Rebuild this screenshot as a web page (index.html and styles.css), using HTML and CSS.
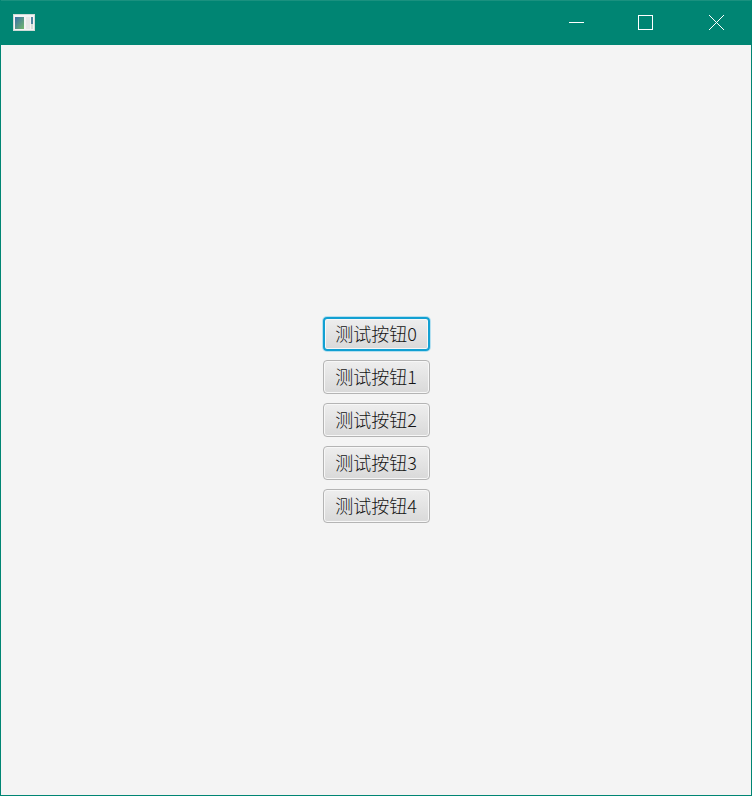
FILE: index.html
```html
<!DOCTYPE html>
<html lang="zh-CN">
<head>
<meta charset="utf-8">
<title>测试按钮</title>
<link rel="stylesheet" href="styles.css">
</head>
<body>
<div class="window">
  <header class="titlebar">
    <svg class="app-icon" width="22" height="17" viewBox="0 0 22 17" aria-hidden="true">
      <rect x="0" y="0" width="22" height="17" fill="#cfdbd8"/>
      <rect x="1" y="1" width="20" height="15" fill="#f4f4f4"/>
      <defs>
        <linearGradient id="pic" x1="0" y1="0" x2="1" y2="1">
          <stop offset="0" stop-color="#3a6fa8"/>
          <stop offset="1" stop-color="#73b86c"/>
        </linearGradient>
      </defs>
      <rect x="2" y="3" width="9" height="12" fill="url(#pic)"/>
      <rect x="13" y="3" width="4" height="12" fill="#e8e8e8"/>
      <rect x="18" y="3" width="2" height="7" fill="#4f86a0"/>
      <rect x="18" y="10" width="2" height="5" fill="#d5e0d8"/>
    </svg>
    <div class="controls">
      <button class="ctl" aria-label="最小化">
        <svg width="15" height="15" viewBox="0 0 15 15"><path d="M0 7.5H15" stroke="#fff" fill="none"/></svg>
      </button>
      <button class="ctl" aria-label="最大化">
        <svg width="15" height="15" viewBox="0 0 15 15"><rect x="0.5" y="0.5" width="14" height="14" stroke="#fff" fill="none"/></svg>
      </button>
      <button class="ctl" aria-label="关闭">
        <svg width="15" height="15" viewBox="0 0 15 15"><path d="M0 0L15 15M15 0L0 15" stroke="#fff" fill="none"/></svg>
      </button>
    </div>
  </header>
  <main class="content">
    <button class="btn focused">测试按钮0</button>
    <button class="btn">测试按钮1</button>
    <button class="btn">测试按钮2</button>
    <button class="btn">测试按钮3</button>
    <button class="btn">测试按钮4</button>
  </main>
</div>
</body>
</html>
```
FILE: styles.css
```css
html, body {
  margin: 0;
  padding: 0;
  height: 100%;
}
.window {
  box-sizing: border-box;
  width: 752px;
  height: 796px;
  display: flex;
  flex-direction: column;
  border: 1px solid #008573;
  border-top: 0;
  background: #f4f4f4;
}
.titlebar {
  box-sizing: border-box;
  height: 45px;
  flex: none;
  display: flex;
  align-items: center;
  justify-content: space-between;
  background: #008573;
  border-top: 1px solid #1a917f;
  padding-left: 12px;
}
.app-icon {
  display: block;
  margin-top: -2px;
}
.controls {
  display: flex;
  height: 100%;
}
.ctl {
  height: 44px;
  padding: 0;
  border: 0;
  background: none;
  display: flex;
  align-items: center;
  justify-content: center;
}
.ctl:nth-child(1) {
  width: 65px;
}
.ctl:nth-child(2) {
  width: 73px;
}
.ctl:nth-child(3) {
  width: 69px;
}
.ctl svg {
  display: block;
  margin-top: -1px;
}
.content {
  flex: 1;
  display: flex;
  flex-direction: column;
  align-items: center;
  justify-content: center;
  gap: 9px;
}
.btn {
  box-sizing: border-box;
  width: 107px;
  height: 34px;
  padding: 0 0 2px;
  border: 1px solid #b4b4b4;
  border-radius: 4px;
  background: linear-gradient(#eeeeee, #d9d9d9);
  box-shadow: inset 0 0 0 1px #f7f7f7;
  color: #141414;
  font: 300 18px/1 "Noto Sans CJK SC", "Liberation Sans", sans-serif;
}
.btn.focused {
  border: 2px solid #12a0d2;
  box-shadow: 0 0 0 1px #b5e0f0, inset 0 0 0 1px #f7f7f7;
}
```
